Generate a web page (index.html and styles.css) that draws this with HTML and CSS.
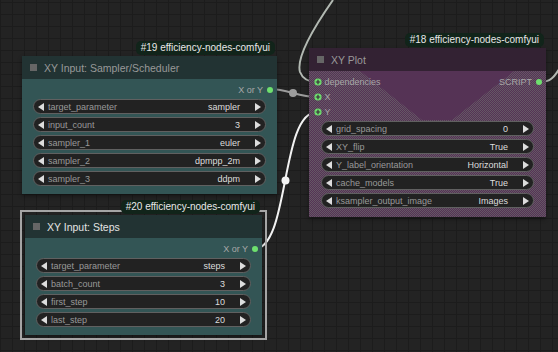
FILE: index.html
```html
<html>
  <head>
    <meta name="viewport" content="width=device-width, initial-scale=1.0">
    <link rel="stylesheet" href="styles.css">
  </head>
  <body>
    <div class="canvas">
      <svg class="wires" width="558" height="352">
        <path d="M333 0 C312 30, 296 58, 300 72 C303 80, 309 82, 317 82" class="wire wire-dep"/>
        <path d="M540 82 C550 82, 554 78, 561 66" class="wire wire-dep"/>
        <path d="M270 89 C288 89, 298 97, 317 97" class="wire wire-x"/>
        <circle cx="293" cy="93" r="4" fill="#9c9c9c"/>
        <path d="M254 249 C290 249, 280 112, 317 112" class="wire wire-y"/>
        <circle cx="285.5" cy="180.5" r="4" fill="#f2f2f2"/>
      </svg>

      <!-- #19 -->
      <div class="node-wrap n19">
        <div class="badge">#19 efficiency-nodes-comfyui</div>
        <div class="node teal">
          <div class="title"><span class="box"></span>XY Input: Sampler/Scheduler</div>
          <div class="body">
            <div class="slots">
              <span class="slot-out">X or Y<i class="dot"></i></span>
            </div>
            <div class="widgets">
              <div class="widget"><i class="arrow left"></i><span class="label">target_parameter</span><span class="value">sampler</span><i class="arrow right"></i></div>
              <div class="widget"><i class="arrow left"></i><span class="label">input_count</span><span class="value">3</span><i class="arrow right"></i></div>
              <div class="widget"><i class="arrow left"></i><span class="label">sampler_1</span><span class="value">euler</span><i class="arrow right"></i></div>
              <div class="widget"><i class="arrow left"></i><span class="label">sampler_2</span><span class="value">dpmpp_2m</span><i class="arrow right"></i></div>
              <div class="widget"><i class="arrow left"></i><span class="label">sampler_3</span><span class="value">ddpm</span><i class="arrow right"></i></div>
            </div>
          </div>
        </div>
      </div>

      <!-- #18 -->
      <div class="node-wrap n18">
        <div class="badge">#18 efficiency-nodes-comfyui</div>
        <div class="node purple">
          <div class="title"><span class="box"></span>XY Plot</div>
          <div class="body hatch">
            <div class="slots">
              <span class="slot-in"><svg width="8" height="8"><circle cx="4" cy="4" r="3.6" fill="#6ee06e"/><path d="M4 1.8v4.4M1.8 4h4.4" stroke="#3a2a3a" stroke-width="1.2"/></svg>dependencies</span>
              <span class="slot-out">SCRIPT<i class="dot"></i></span>
              <span class="slot-in"><svg width="8" height="8"><circle cx="4" cy="4" r="3.6" fill="#6ee06e"/><path d="M4 1.8v4.4M1.8 4h4.4" stroke="#3a2a3a" stroke-width="1.2"/></svg>X</span>
              <span class="slot-in"><svg width="8" height="8"><circle cx="4" cy="4" r="3.6" fill="#6ee06e"/><path d="M4 1.8v4.4M1.8 4h4.4" stroke="#3a2a3a" stroke-width="1.2"/></svg>Y</span>
            </div>
            <div class="widgets">
              <div class="widget"><i class="arrow left"></i><span class="label">grid_spacing</span><span class="value">0</span><i class="arrow right"></i></div>
              <div class="widget"><i class="arrow left"></i><span class="label">XY_flip</span><span class="value">True</span><i class="arrow right"></i></div>
              <div class="widget"><i class="arrow left"></i><span class="label">Y_label_orientation</span><span class="value">Horizontal</span><i class="arrow right"></i></div>
              <div class="widget"><i class="arrow left"></i><span class="label">cache_models</span><span class="value">True</span><i class="arrow right"></i></div>
              <div class="widget"><i class="arrow left"></i><span class="label">ksampler_output_image</span><span class="value">Images</span><i class="arrow right"></i></div>
            </div>
          </div>
        </div>
      </div>

      <!-- #20 -->
      <div class="node-wrap n20">
        <div class="badge">#20 efficiency-nodes-comfyui</div>
        <div class="node teal selected">
          <div class="title"><span class="box"></span>XY Input: Steps</div>
          <div class="body">
            <div class="slots">
              <span class="slot-out">X or Y<i class="dot"></i></span>
            </div>
            <div class="widgets">
              <div class="widget"><i class="arrow left"></i><span class="label">target_parameter</span><span class="value">steps</span><i class="arrow right"></i></div>
              <div class="widget"><i class="arrow left"></i><span class="label">batch_count</span><span class="value">3</span><i class="arrow right"></i></div>
              <div class="widget"><i class="arrow left"></i><span class="label">first_step</span><span class="value">10</span><i class="arrow right"></i></div>
              <div class="widget"><i class="arrow left"></i><span class="label">last_step</span><span class="value">20</span><i class="arrow right"></i></div>
            </div>
          </div>
        </div>
      </div>
    </div>
  </body>
</html>
```

FILE: styles.css
```css
body {
  margin: 0;
  background-color: #222;
  font-family: "Liberation Sans", Arial, sans-serif;
}

.canvas {
  position: relative;
  width: 558px;
  height: 352px;
  overflow: hidden;
  background-color: #232323;
  background-image:
    linear-gradient(#1c1c1c 1px, transparent 1px),
    linear-gradient(90deg, #1c1c1c 1px, transparent 1px);
  background-size: 12px 12px;
  background-position: 0 2px;
}

/* ===== Wires ===== */
.wires {
  position: absolute;
  left: 0;
  top: 0;
}

.wire {
  fill: none;
  stroke-width: 2;
}

.wire-dep {
  stroke: #b2b9b2;
}

.wire-x {
  stroke: #9c9c9c;
}

.wire-y {
  stroke: #f2f2f2;
}

/* ===== Nodes ===== */
.node-wrap {
  position: absolute;
  display: flex;
  flex-direction: column;
}

.n19 {
  left: 22px;
  top: 41px;
  width: 255px;
}

.n18 {
  left: 309px;
  top: 33px;
  width: 237px;
}

.n20 {
  left: 25px;
  top: 200px;
  width: 237px;
}

.badge {
  position: relative;
  z-index: 1;
  align-self: flex-end;
  margin: 0 2px 1px 0;
  height: 14px;
  line-height: 14px;
  padding: 0 5px;
  font-size: 10px;
  color: #e8e8e8;
  background-color: #11241a;
  border-radius: 5px;
}

.node {
  box-shadow: 0 2px 4px rgba(0,0,0,0.4);
}

.title {
  height: 23px;
  display: flex;
  align-items: center;
  gap: 7px;
  padding-left: 8px;
  font-size: 10.5px;
  color: #999;
}

.title .box {
  width: 7px;
  height: 7px;
  background-color: #666;
}

.teal .title {
  background-color: #223333;
}

.teal .body {
  background-color: #335555;
}

.purple .title {
  background-color: #332233;
}

.purple .body {
  background-color: #553355;
}

.selected {
  outline: 2px solid #a5a5a5;
  outline-offset: 3px;
}

.selected .title {
  color: #e4e4e4;
}

.body {
  position: relative;
  padding: 3px 11px 8px;
}

.n18 .body {
  padding: 3px 12px 9px;
}

.hatch::before {
  content: "";
  position: absolute;
  inset: 0;
  background: repeating-conic-gradient(#553355 0 25%, #655765 0 50%) 0 0 / 2px 2px;
  clip-path: polygon(0 0, 51px 0, 113px 49px, 143px 49px, 205px 0, 100% 0, 100% 100%, 0 100%);
}

/* ===== Slots ===== */
.slots {
  position: relative;
  display: grid;
  grid-template-columns: 1fr auto;
  grid-auto-rows: 15px;
  margin: 0 -7px 2px;
  font-size: 9px;
  color: #a8a8a8;
}

.n18 .slots {
  margin: 0 -8px 2px -8px;
  padding-left: 0.5px;
}

.slot-in {
  grid-column: 1;
  display: flex;
  align-items: center;
  gap: 3px;
}

.slot-out {
  grid-column: 2;
  grid-row: 1;
  display: flex;
  align-items: center;
  gap: 4px;
}

.dot {
  width: 6px;
  height: 6px;
  border-radius: 50%;
  background-color: #6ee06e;
}

/* ===== Widgets ===== */
.widgets {
  position: relative;
  display: flex;
  flex-direction: column;
  gap: 3px;
}

.widget {
  box-sizing: border-box;
  height: 15px;
  display: flex;
  align-items: center;
  padding: 0 4px;
  background-color: #222;
  border: 1px solid #606060;
  border-radius: 8px;
  font-size: 9px;
}

.label {
  margin-left: 4px;
  color: #999;
}

.value {
  margin-left: auto;
  margin-right: 15px;
  color: #ddd;
}

.arrow {
  width: 0;
  height: 0;
  border-top: 4px solid transparent;
  border-bottom: 4px solid transparent;
}

.arrow.left {
  border-right: 6px solid #ddd;
}

.arrow.right {
  border-left: 6px solid #ddd;
}
```
